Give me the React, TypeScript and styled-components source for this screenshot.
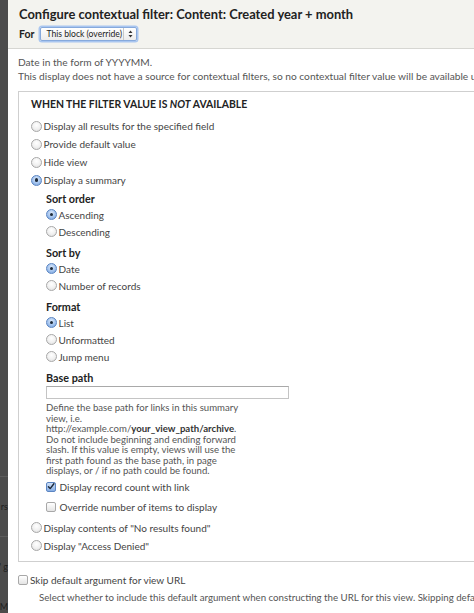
import React from "react";
import styled, { createGlobalStyle, css } from "styled-components";

const GlobalStyle = createGlobalStyle`
  html, body {
    margin: 0;
    padding: 0;
    background: #4b4b4b;
    overflow: hidden;
  }
  * { box-sizing: border-box; }
`;

const FONT = `"Lato", "Liberation Sans", sans-serif`;

const Page = styled.div`
  display: flex;
  width: 474px;
  height: 613px;
  overflow: hidden;
  font-family: ${FONT};
`;

const Backdrop = styled.div`
  width: 8px;
  flex-shrink: 0;
  background: #4b4b4b;
  display: flex;
  flex-direction: column;
  padding-top: 476px;
  color: #1e1e1e;
  font-size: 9px;
  line-height: 10px;
  overflow: hidden;
`;

const BackdropRule = styled.div<{ $mt: number }>`
  height: 1px;
  background: #5c5c5c;
  margin-top: ${(p) => p.$mt}px;
`;

const BackdropText = styled.span<{ $mt: number }>`
  display: block;
  direction: rtl;
  white-space: nowrap;
  margin-top: ${(p) => p.$mt}px;
`;

const Dialog = styled.div`
  width: 720px;
  flex-shrink: 0;
  background: #fff;
  display: flex;
  flex-direction: column;
`;

const Header = styled.div`
  background: #f3f3ef;
  border-bottom: 1px solid #d6d6d2;
  height: 49px;
  padding: 5px 11px 0;
  display: flex;
  flex-direction: column;
  gap: 4px;
`;

const Title = styled.h1`
  margin: 0;
  font-size: 12.9px;
  line-height: 18px;
  font-weight: 700;
  color: #222;
`;

const ForRow = styled.div`
  display: flex;
  align-items: center;
  gap: 6px;
  font-size: 10.5px;
  font-weight: 700;
  color: #222;
`;

const Select = styled.div`
  display: flex;
  align-items: center;
  width: 97px;
  height: 14px;
  border: 1px solid #86a9dc;
  box-shadow: 0 0 0 1.5px #a9c6f0;
  border-radius: 2px;
  background: linear-gradient(#ffffff, #ececec);
  font-size: 8.6px;
  font-weight: 400;
  color: #222;
  padding-left: 5px;
`;

const SelectText = styled.span`
  flex: 1;
  white-space: nowrap;
`;

const SelectArrows = styled.span`
  width: 13px;
  height: 100%;
  border-left: 1px solid #c8c8c8;
  display: flex;
  align-items: center;
  justify-content: center;
`;

const Body = styled.div`
  padding: 6px 10px 0 10px;
  display: flex;
  flex-direction: column;
`;

const Note = styled.div`
  font-size: 10.2px;
  line-height: 14px;
  color: #555;
  white-space: nowrap;
`;

const Fieldset = styled.div`
  margin-top: 8px;
  border: 1px solid #cfcfcf;
  padding: 4px 12px 6px 12px;
  display: flex;
  flex-direction: column;
`;

const Legend = styled.div`
  font-size: 10.4px;
  font-weight: 700;
  color: #222;
  line-height: 16px;
  margin-bottom: 5px;
  text-transform: uppercase;
  & em { font-style: italic; }
`;

const OptionRow = styled.label<{ $h?: number }>`
  display: flex;
  align-items: center;
  gap: 1.5px;
  height: ${(p) => p.$h ?? 18}px;
  font-size: 10px;
  color: #444;
  white-space: nowrap;
`;

const RadioDot = styled.span<{ $on?: boolean }>`
  width: 11px;
  height: 11px;
  border-radius: 50%;
  flex-shrink: 0;
  border: 1px solid #a8a8a8;
  background: radial-gradient(circle at 50% 35%, #ffffff 0%, #f0f0f0 55%, #d9d9d9 100%);
  display: flex;
  align-items: center;
  justify-content: center;
  ${(p) =>
    p.$on &&
    css`
      border-color: #5b85c2;
      background: radial-gradient(circle at 50% 35%, #dce9fb 0%, #9dbfec 60%, #6f9bd8 100%);
      &::after {
        content: "";
        width: 3.5px;
        height: 3.5px;
        border-radius: 50%;
        background: #1d2a3a;
      }
    `}
`;

const CheckBox = styled.span<{ $on?: boolean }>`
  width: 10px;
  height: 10px;
  border-radius: 2px;
  flex-shrink: 0;
  border: 1px solid #a8a8a8;
  background: linear-gradient(#ffffff, #e4e4e4);
  margin-right: 2px;
  display: flex;
  align-items: center;
  justify-content: center;
  ${(p) =>
    p.$on &&
    css`
      border-color: #5b85c2;
      background: linear-gradient(#cfe0f8, #86ade3);
    `}
`;

const SubGroup = styled.div`
  padding-left: 15px;
  display: flex;
  flex-direction: column;
`;

const SubHeading = styled.div`
  font-size: 10.8px;
  font-weight: 700;
  color: #222;
  height: 17px;
  display: flex;
  align-items: flex-end;
  padding-bottom: 1px;
`;

const Spacer = styled.div<{ $h: number }>`
  height: ${(p) => p.$h}px;
`;

const TextInput = styled.div`
  width: 243px;
  height: 13px;
  border: 1px solid #c4c4c4;
  border-top-color: #a9a9a9;
  background: #fff;
  margin: 1px 0 4px;
`;

const Description = styled.div`
  width: 200px;
  font-size: 9.6px;
  line-height: 10.5px;
  color: #555;
  & b { font-weight: 700; color: #333; }
`;

const SkipRow = styled.label`
  display: flex;
  align-items: center;
  margin-top: 9px;
  height: 18px;
  font-size: 10px;
  color: #444;
  white-space: nowrap;
`;

const SkipNote = styled.div`
  padding-left: 21px;
  margin-top: 1px;
  font-size: 9.7px;
  line-height: 14px;
  color: #555;
  white-space: nowrap;
`;

const Check = () => (
  <svg width="9" height="9" viewBox="0 0 10 10">
    <path d="M1.8 5.2 L4 7.6 L8.6 1.6" fill="none" stroke="#1d2a3a" strokeWidth="1.8" strokeLinecap="round" strokeLinejoin="round" />
  </svg>
);

const Radio: React.FC<{ on?: boolean; h?: number; children: React.ReactNode }> = ({ on, h, children }) => (
  <OptionRow $h={h}>
    <RadioDot $on={on} />
    {children}
  </OptionRow>
);

const Checkbox: React.FC<{ on?: boolean; h?: number; children: React.ReactNode }> = ({ on, h, children }) => (
  <OptionRow $h={h}>
    <CheckBox $on={on}>{on && <Check />}</CheckBox>
    {children}
  </OptionRow>
);

export default function App() {
  return (
    <>
      <GlobalStyle />
      <Page>
        <Backdrop>
          <BackdropRule $mt={0} />
          <BackdropText $mt={25}>rs</BackdropText>
          <BackdropRule $mt={24} />
          <BackdropText $mt={25}>g '</BackdropText>
          <BackdropText $mt={30}>M</BackdropText>
        </Backdrop>
        <Dialog>
          <Header>
            <Title>Configure contextual filter: Content: Created year + month</Title>
            <ForRow>
              For
              <Select>
                <SelectText>This block (override)</SelectText>
                <SelectArrows>
                  <svg width="5" height="8" viewBox="0 0 5 8">
                    <path d="M0.5 3 L2.5 0.5 L4.5 3 Z M0.5 5 L2.5 7.5 L4.5 5 Z" fill="#333" />
                  </svg>
                </SelectArrows>
              </Select>
            </ForRow>
          </Header>
          <Body>
            <Note>Date in the form of YYYYMM.</Note>
            <Note>
              This display does not have a source for contextual filters, so no contextual filter value will be available unless you select 'Provide default'.
            </Note>
            <Fieldset>
              <Legend>
                When the filter value is <em>not</em> available
              </Legend>
              <Radio>Display all results for the specified field</Radio>
              <Radio>Provide default value</Radio>
              <Radio>Hide view</Radio>
              <Radio on>Display a summary</Radio>
              <SubGroup>
                <SubHeading>Sort order</SubHeading>
                <Radio on h={17}>Ascending</Radio>
                <Radio h={17}>Descending</Radio>
                <Spacer $h={3} />
                <SubHeading>Sort by</SubHeading>
                <Radio on h={17}>Date</Radio>
                <Radio h={17}>Number of records</Radio>
                <Spacer $h={3} />
                <SubHeading>Format</SubHeading>
                <Radio on h={17}>List</Radio>
                <Radio h={17}>Unformatted</Radio>
                <Radio h={17}>Jump menu</Radio>
                <Spacer $h={3} />
                <SubHeading>Base path</SubHeading>
                <TextInput />
                <Description>
                  Define the base path for links in this summary view, i.e. http://example.com/<b>your_view_path/archive</b>.
                  Do not include beginning and ending forward slash. If this value is empty, views will use the first path
                  found as the base path, in page displays, or / if no path could be found.
                </Description>
                <Checkbox on h={20}>Display record count with link</Checkbox>
                <Checkbox h={20}>Override number of items to display</Checkbox>
                <Spacer $h={2} />
              </SubGroup>
              <Radio>Display contents of "No results found"</Radio>
              <Radio>Display "Access Denied"</Radio>
            </Fieldset>
            <SkipRow>
              <CheckBox />
              Skip default argument for view URL
            </SkipRow>
            <SkipNote>
              Select whether to include this default argument when constructing the URL for this view. Skipping default arguments is useful e.g. in the case of feeds.
            </SkipNote>
          </Body>
        </Dialog>
      </Page>
    </>
  );
}
